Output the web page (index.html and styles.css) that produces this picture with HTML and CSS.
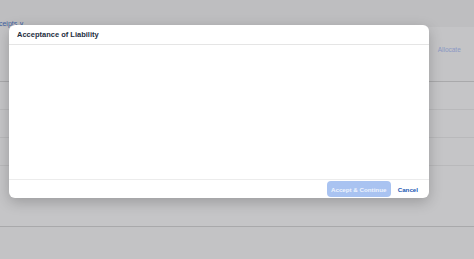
FILE: index.html
```html
<!DOCTYPE html>
<html>
<head>
<meta charset="utf-8">
<link rel="stylesheet" href="styles.css">
</head>
<body>
<div class="page">
  <div class="topbar">
    <span class="crumb">Receipts ∨</span>
  </div>
  <div class="toolbar">
    <span class="tool">Allocate</span>
    <span class="tool">Reverse</span>
  </div>
  <div class="row"></div>
  <div class="row"></div>
  <div class="row"></div>
  <div class="row row-last"></div>
</div>
<div class="dialog">
  <div class="dlg-header">Acceptance of Liability</div>
  <div class="dlg-body"></div>
  <div class="dlg-footer">
    <button class="btn-primary">Accept &amp; Continue</button>
    <button class="btn-link">Cancel</button>
  </div>
</div>
</body>
</html>
```
FILE: styles.css
```css
html, body {
  margin: 0;
  padding: 0;
}
body {
  width: 474px;
  height: 259px;
  overflow: hidden;
  background: #c3c3c5;
  font-family: "Liberation Sans", Arial, sans-serif;
  position: relative;
}
.page {
  display: flex;
  flex-direction: column;
  height: 259px;
}
.topbar {
  height: 27px;
  flex: none;
  background: #bebec0;
  position: relative;
}
.crumb {
  position: absolute;
  left: -10px;
  top: 20px;
  font-size: 7px;
  color: #3d5d9e;
}
.toolbar {
  height: 55px;
  flex: none;
  display: flex;
  justify-content: flex-end;
  align-items: flex-start;
  gap: 22px;
  padding: 19px 0 0 0;
  box-sizing: border-box;
  margin-right: -33px;
  border-bottom: 1px solid #a9a9ab;
  background: #c4c4c6;
}
.tool {
  font-size: 6.5px;
  color: #8b98c4;
}
.row {
  height: 27px;
  flex: none;
  border-bottom: 1px solid #b9b9bb;
  background: #c5c5c7;
}
.row-last {
  height: 60px;
  border-bottom: 1px solid #a9a9ab;
}
.dialog {
  position: absolute;
  left: 9px;
  top: 25px;
  width: 420px;
  height: 173px;
  background: #fff;
  border-radius: 6px;
  box-shadow: 0 4px 14px rgba(0, 0, 0, 0.22);
  display: flex;
  flex-direction: column;
  overflow: hidden;
}
.dlg-header {
  height: 20px;
  box-sizing: border-box;
  border-bottom: 1px solid #e5e5e5;
  padding: 5px 0 0 8px;
  font-size: 7.5px;
  font-weight: bold;
  color: #1d2d3e;
}
.dlg-body {
  flex: 1;
}
.dlg-footer {
  height: 19px;
  box-sizing: border-box;
  border-top: 1px solid #ececec;
  display: flex;
  justify-content: flex-end;
  align-items: center;
  gap: 6px;
  padding: 0 11px 0 0;
}
.btn-primary {
  height: 16px;
  width: 64px;
  border: none;
  border-radius: 4px;
  background: #a9c3f1;
  color: #eef3fd;
  font-family: inherit;
  font-size: 6.2px;
  font-weight: bold;
  padding: 0;
}
.btn-link {
  border: none;
  background: none;
  color: #1b57b3;
  font-family: inherit;
  font-size: 6.2px;
  font-weight: bold;
  padding: 0 0 0 1px;
}
```
